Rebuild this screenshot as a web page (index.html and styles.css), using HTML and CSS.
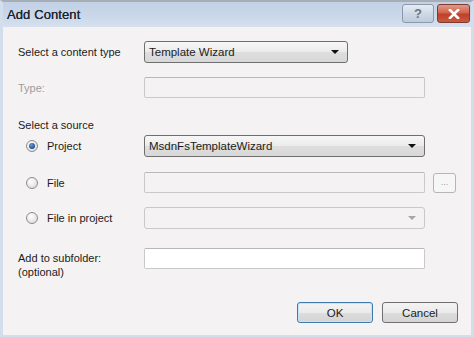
FILE: index.html
```html
<!DOCTYPE html>
<html lang="en">
<head>
    <meta charset="UTF-8">
    <title>Add Content</title>
    <link rel="stylesheet" href="styles.css">
</head>
<body>
    <div class="window">
        <div class="titlebar">
            <div class="title">Add Content</div>
            <div class="controls">
                <div class="ctl help">?</div>
                <div class="ctl close">
                    <svg width="14" height="10" viewBox="0 0 14 10">
                        <path d="M3 1 L11 9 M11 1 L3 9" stroke="#fff" stroke-width="2.6" stroke-linecap="square"/>
                    </svg>
                </div>
            </div>
        </div>

        <div class="content">
            <div class="row first">
                <div class="label">Select a content type</div>
                <div class="combo short">
                    <span>Template Wizard</span>
                    <span class="arrow"></span>
                </div>
            </div>

            <div class="row">
                <div class="label disabled">Type:</div>
                <div class="textbox off"></div>
            </div>

            <div class="section">Select a source</div>

            <div class="row tight">
                <label class="radio-label"><span class="radio checked"></span>Project</label>
                <div class="combo">
                    <span>MsdnFsTemplateWizard</span>
                    <span class="arrow"></span>
                </div>
            </div>

            <div class="row">
                <label class="radio-label"><span class="radio"></span>File</label>
                <div class="textbox off"></div>
                <div class="browse">...</div>
            </div>

            <div class="row">
                <label class="radio-label"><span class="radio"></span>File in project</label>
                <div class="combo off">
                    <span></span>
                    <span class="arrow"></span>
                </div>
            </div>

            <div class="row sub">
                <div class="label">Add to subfolder:<br>(optional)</div>
                <div class="textbox"></div>
            </div>

            <div class="buttons">
                <div class="btn default">OK</div>
                <div class="btn">Cancel</div>
            </div>
        </div>
    </div>
</body>
</html>
```

FILE: styles.css
```css
* {
    margin: 0;
    padding: 0;
    box-sizing: border-box;
}

body {
    width: 474px;
    height: 337px;
    overflow: hidden;
    font-family: 'Liberation Sans', Arial, sans-serif;
    font-size: 11px;
    color: #1b1b1b;
    background: #cfdbea;
}

.window {
    height: 337px;
    display: flex;
    flex-direction: column;
    border-top: 2px solid #a7adb5;
    border-left: 3px solid #d3deec;
    border-right: 3px solid #d3deec;
    border-bottom: 2px solid #d3deec;
}

.titlebar {
    height: 25px;
    display: flex;
    align-items: center;
    justify-content: space-between;
    background: linear-gradient(180deg, #c2d1e5 0%, #cbd8ea 60%, #d6e1ef 100%);
    padding: 0 1px 0 4px;
}

.title {
    font-size: 13px;
    color: #1e2633;
    letter-spacing: 0.1px;
    text-shadow: 0 0 0.5px #1e2633;
}

.controls {
    display: flex;
    gap: 3px;
    align-self: flex-start;
    margin-top: 2px;
}

.ctl {
    height: 19px;
    border-radius: 3px;
    display: flex;
    align-items: center;
    justify-content: center;
}

.help {
    width: 32px;
    border: 1px solid #8c99aa;
    background: linear-gradient(180deg, #e4ebf4 0%, #cfd9e6 50%, #bfcbdb 100%);
    color: #6b7483;
    font-size: 13px;
    font-weight: bold;
}

.close {
    width: 33px;
    border: 1px solid #7d3a30;
    background: linear-gradient(180deg, #e29a88 0%, #d0654f 45%, #bd4129 55%, #c85a40 100%);
}

.content {
    flex: 1;
    background: #f4f2f2;
    padding: 14px 13px 0 15px;
}

.row {
    display: flex;
    align-items: center;
    margin-bottom: 14px;
}

.row.tight {
    margin-bottom: 15px;
}

.label,
.radio-label {
    width: 126px;
    flex-shrink: 0;
}

.label.disabled {
    color: #9c9c9c;
}

.section {
    margin: 21px 0 3px;
    line-height: 13px;
}

.radio-label {
    display: flex;
    align-items: center;
    padding-left: 8px;
    gap: 9px;
}

.radio {
    width: 12px;
    height: 12px;
    border-radius: 50%;
    border: 1px solid #8d8d8d;
    background: radial-gradient(circle at 40% 35%, #ffffff 0%, #e6e6e6 60%, #cfcfcf 100%);
    position: relative;
}

.radio.checked::after {
    content: '';
    position: absolute;
    top: 2px;
    left: 2px;
    width: 6px;
    height: 6px;
    border-radius: 50%;
    background: radial-gradient(circle at 40% 35%, #6c9bd3 0%, #1d4f8c 70%, #163d6e 100%);
}

.combo,
.textbox {
    width: 281px;
    height: 22px;
    border-radius: 3px;
}

.combo {
    display: flex;
    align-items: center;
    justify-content: space-between;
    padding: 0 8px 0 4px;
    border: 1px solid #6f6f6f;
    background: linear-gradient(180deg, #f7f7f7 0%, #ebebeb 50%, #dedede 51%, #d8d8d8 100%);
    font-size: 11.5px;
}

.combo.short {
    width: 204px;
}

.arrow {
    width: 0;
    height: 0;
    border-left: 4px solid transparent;
    border-right: 4px solid transparent;
    border-top: 4px solid #111;
}

.combo.off {
    border-color: #c9c9c9;
    background: #f4f2f2;
}

.combo.off .arrow {
    border-top-color: #a6a6a6;
}

.textbox {
    height: 21px;
    border: 1px solid #c9c9c9;
    border-top-color: #b8b8b8;
    border-radius: 2px;
    background: #ffffff;
}

.textbox.off {
    background: #f4f2f2;
}

.browse {
    width: 23px;
    height: 20px;
    margin-left: 8px;
    border: 1px solid #b6b6b6;
    border-radius: 3px;
    background: #f7f6f6;
    color: #a0a0a0;
    font-size: 9px;
    text-align: center;
    line-height: 16px;
}

.row.sub {
    align-items: flex-start;
    margin-top: 19px;
}

.row.sub .label {
    line-height: 14px;
    margin-top: 3px;
}

.buttons {
    display: flex;
    justify-content: flex-end;
    gap: 9px;
    margin-top: 23px;
}

.btn {
    width: 76px;
    height: 21px;
    border: 1px solid #707070;
    border-radius: 3px;
    background: linear-gradient(180deg, #f3f3f3 0%, #ebebeb 50%, #dddddd 51%, #d4d4d4 100%);
    display: flex;
    align-items: center;
    justify-content: center;
    font-size: 11.5px;
}

.btn.default {
    border-color: #3d7bad;
    box-shadow: inset 0 0 0 1px #c6e4f8;
}
```
